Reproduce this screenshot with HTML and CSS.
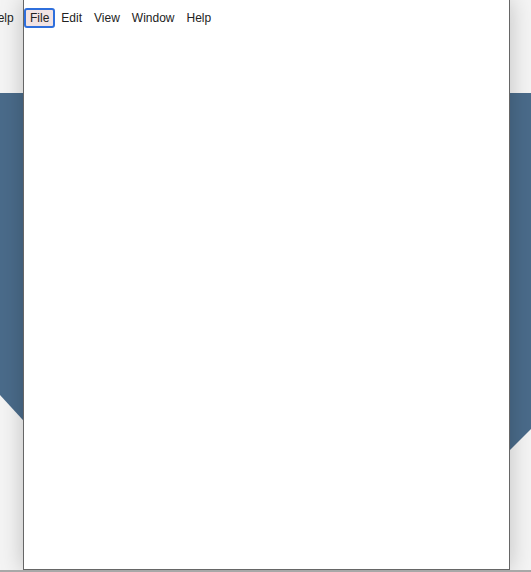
FILE: index.html
```html
<!DOCTYPE html>
<html lang="en">

<head>
    <meta charset="UTF-8">
    <meta name="viewport" content="width=device-width, initial-scale=1.0">
    <title>Menu</title>
    <link rel="stylesheet" href="styles.css">
</head>

<body>
    <div class="desktop">
        <div class="backdrop">
            <div class="backdrop-menu">Help</div>
            <div class="band"></div>
        </div>

        <div class="window">
            <nav class="menubar">
                <span class="menu-item active">File</span>
                <span class="menu-item">Edit</span>
                <span class="menu-item">View</span>
                <span class="menu-item">Window</span>
                <span class="menu-item">Help</span>
            </nav>
        </div>

        <div class="taskbar"></div>
    </div>
</body>

</html>
```

FILE: styles.css
```css
* {
    margin: 0;
    padding: 0;
    box-sizing: border-box;
    font-family: "Liberation Sans", Arial, sans-serif;
}

body {
    width: 531px;
    height: 572px;
    overflow: hidden;
    background: #f4f4f4;
}

.desktop {
    position: relative;
    width: 531px;
    height: 572px;
    overflow: hidden;
}

.backdrop {
    position: absolute;
    inset: 0;
}

.backdrop-menu {
    position: absolute;
    left: -11px;
    top: 10px;
    font-size: 12px;
    line-height: 16px;
    color: #222;
}

.band {
    position: absolute;
    left: 0;
    top: 93px;
    width: 531px;
    height: 479px;
    background: #4a6b8a;
    clip-path: polygon(0 0, 100% 0, 100% 336px, 270px 597px, 0 302px);
}

.window {
    position: absolute;
    left: 23px;
    top: 0;
    width: 487px;
    height: 570px;
    background: #fff;
    border: 1px solid #666;
    border-top: 0;
    box-shadow: 0 0 22px rgba(0, 0, 0, 0.22);
}

.menubar {
    display: flex;
    padding-top: 8px;
}

.menu-item {
    font-size: 12px;
    line-height: 16px;
    color: #222;
    padding: 0 4px;
    border: 2px solid transparent;
    border-radius: 3px;
}

.menu-item.active {
    background: #f2e3e3;
    border-color: #2f6fdc;
}

.taskbar {
    position: absolute;
    left: 0;
    bottom: 0;
    width: 531px;
    height: 2px;
    background: #a8a8a8;
}
```
